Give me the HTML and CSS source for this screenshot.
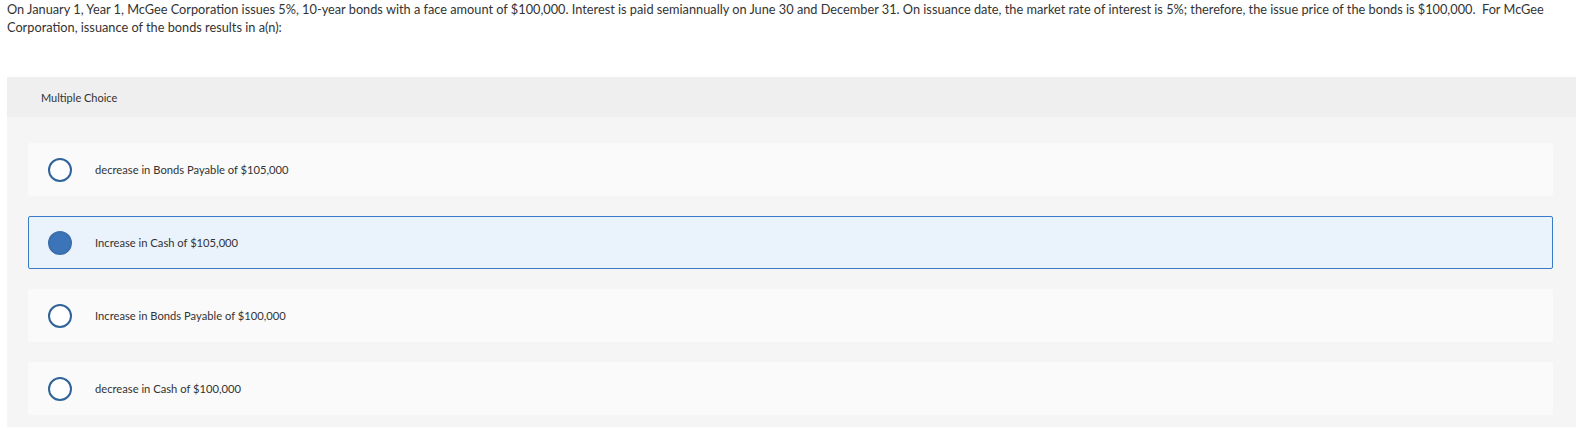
FILE: index.html
```html
<!DOCTYPE html>
<html>
<head>
<meta charset="utf-8">
<link rel="stylesheet" href="styles.css">
</head>
<body>
<p class="question">On January 1, Year 1, McGee Corporation issues 5%, 10-year bonds with a face amount of $100,000. Interest is paid semiannually on June 30 and December 31. On issuance date, the market rate of interest is 5%; therefore, the issue price of the bonds is $100,000.&nbsp; For McGee Corporation, issuance of the bonds results in a(n):</p>
<div class="panel">
  <div class="panel-head">Multiple Choice</div>
  <div class="choices">
    <div class="choice"><span class="radio"></span><span class="label">decrease in Bonds Payable of $105,000</span></div>
    <div class="choice selected"><span class="radio"></span><span class="label">Increase in Cash of $105,000</span></div>
    <div class="choice"><span class="radio"></span><span class="label">Increase in Bonds Payable of $100,000</span></div>
    <div class="choice"><span class="radio"></span><span class="label">decrease in Cash of $100,000</span></div>
  </div>
</div>
</body>
</html>
```
FILE: styles.css
```css
html, body {
  margin: 0;
  padding: 0;
  background: #ffffff;
}
body {
  font-family: Lato, "Noto Sans", sans-serif;
  color: #333333;
}
.question {
  margin: 0;
  padding: 0 0 0 7px;
  font-size: 12.75px;
  line-height: 18px;
}
.panel {
  margin-top: 41px;
  margin-left: 7px;
  background: #f5f5f5;
}
.panel-head {
  height: 40px;
  background: #efefef;
  display: flex;
  align-items: center;
  padding-left: 34px;
  font-size: 11px;
}
.choices {
  display: flex;
  flex-direction: column;
  gap: 20px;
  padding: 26px 23px 16px 21px;
}
.choice {
  height: 53px;
  box-sizing: border-box;
  background: #fafafa;
  border: 1px solid transparent;
  border-radius: 2px;
  display: flex;
  align-items: center;
  padding-left: 19px;
  gap: 23px;
  font-size: 11.2px;
}
.choice.selected {
  background: #eaf2fb;
  border-color: #3a7bc8;
}
.radio {
  width: 24px;
  height: 24px;
  box-sizing: border-box;
  border-radius: 50%;
  border: 2px solid #2f6399;
  background: #ffffff;
}
.selected .radio {
  background: #3b74b8;
  border-color: #3b6fab;
}
```
